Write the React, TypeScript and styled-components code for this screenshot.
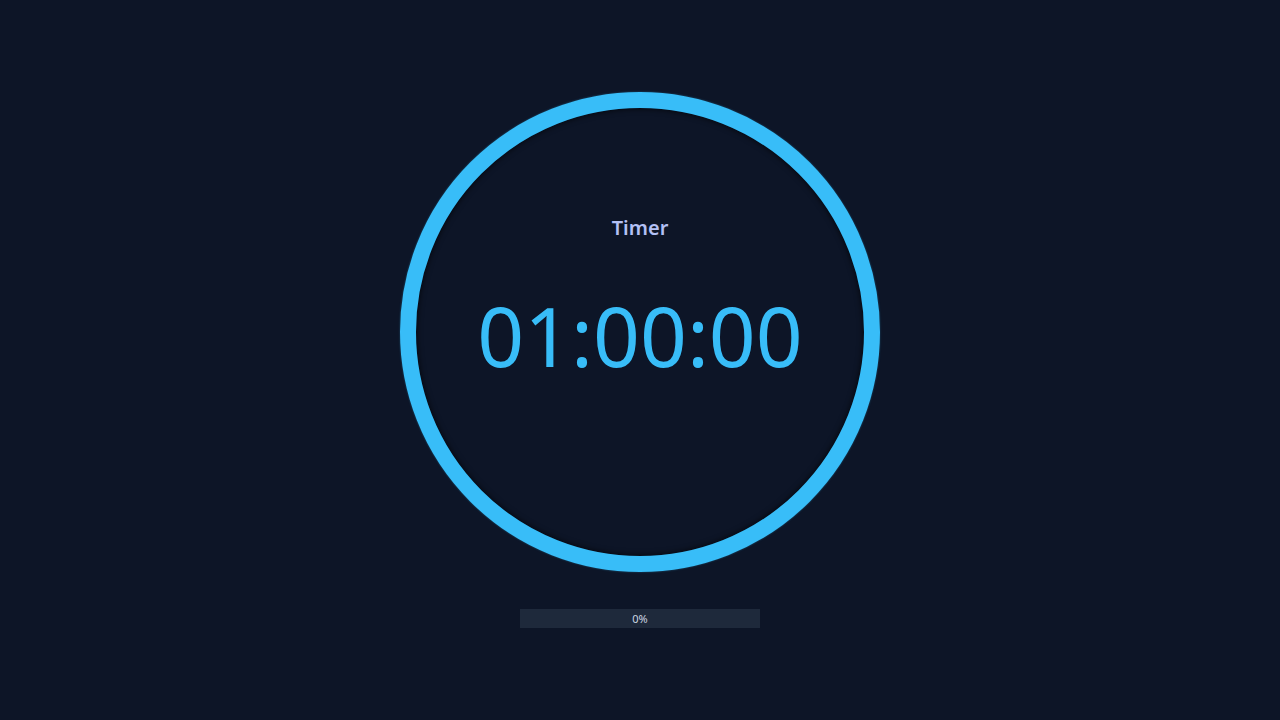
import React from 'react'
import styled, { createGlobalStyle } from 'styled-components'

const GlobalStyle = createGlobalStyle`
  html, body {
    margin: 0;
    padding: 0;
    background: #0d1527;
  }
  body {
    font-family: "Noto Sans", "Open Sans", sans-serif;
  }
`

const Page = styled.main`
  min-height: 100vh;
  display: flex;
  flex-direction: column;
  align-items: center;
  justify-content: center;
  gap: 37px;
`

const Dial = styled.div`
  width: 480px;
  height: 480px;
  box-sizing: border-box;
  border-radius: 50%;
  border: 16px solid #38bdf8;
  box-shadow: inset 0 0 6px rgba(0, 0, 0, 0.8), 0 0 2px rgba(56, 189, 248, 0.4);
  display: flex;
  flex-direction: column;
  align-items: center;
  justify-content: center;
  padding-bottom: 72px;
`

const Label = styled.div`
  font-size: 20px;
  font-weight: 600;
  color: #b3c0f5;
  line-height: 24px;
  margin-bottom: 54px;
`

const Clock = styled.div`
  font-size: 82px;
  font-weight: 400;
  line-height: 1;
  color: #38bdf8;
`

const Bar = styled.div`
  width: 240px;
  height: 19px;
  background: #1e293b;
  display: flex;
  align-items: center;
  justify-content: center;
  font-size: 11px;
  color: #cbd5e1;
`

export default function App() {
  const progress = 0
  return (
    <>
      <GlobalStyle />
      <Page>
        <Dial>
          <Label>Timer</Label>
          <Clock>01:00:00</Clock>
        </Dial>
        <Bar>{progress}%</Bar>
      </Page>
    </>
  )
}
